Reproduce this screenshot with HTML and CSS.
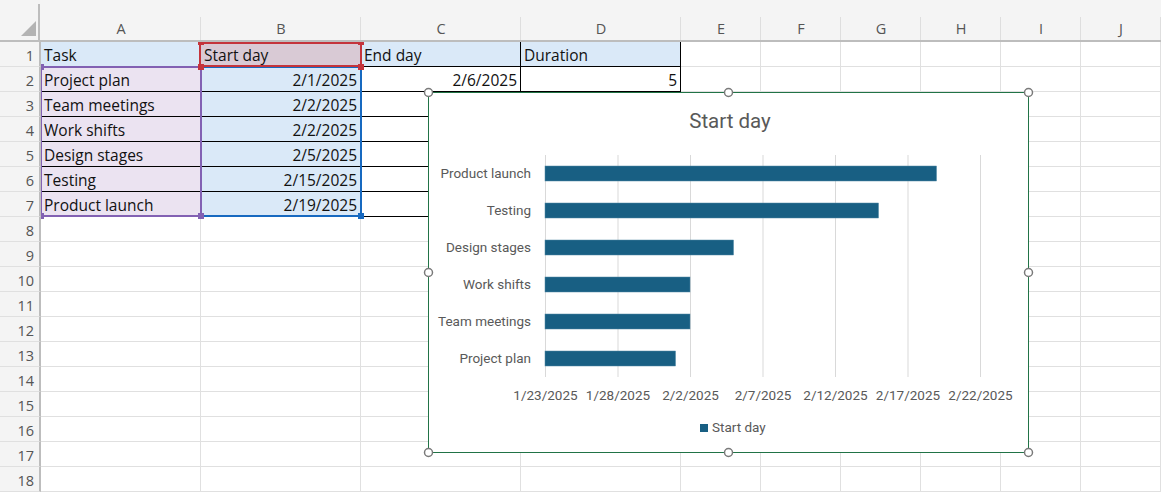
FILE: index.html
```html
<!DOCTYPE html>
<html lang="en">
<head>
    <meta charset="UTF-8">
    <title>Start day - Gantt sheet</title>

    <link rel="stylesheet" href="styles.css">

</head>
<body>

<div class="sheet">
    <!-- column headers -->
    <div class="corner">
        <svg width="41" height="40" viewBox="0 0 41 40">
            <rect x="38" y="4" width="2" height="36" fill="#bdbdbd"/>
            <polygon points="21,36 36,36 36,21" fill="#b3b3b3"/>
        </svg>
    </div>
    <div class="ch">A</div>
    <div class="ch">B</div>
    <div class="ch">C</div>
    <div class="ch">D</div>
    <div class="ch">E</div>
    <div class="ch">F</div>
    <div class="ch">G</div>
    <div class="ch">H</div>
    <div class="ch">I</div>
    <div class="ch">J</div>

    <!-- row 1 -->
    <div class="rh">1</div>
    <div class="c b fill-head">Task</div>
    <div class="c b fill-pick">Start day</div>
    <div class="c b fill-head">End day</div>
    <div class="c b fill-head">Duration</div>
    <div class="c"></div><div class="c"></div><div class="c"></div><div class="c"></div><div class="c"></div><div class="c"></div>

    <!-- row 2 -->
    <div class="rh">2</div>
    <div class="c b fill-task">Project plan</div>
    <div class="c b fill-date num">2/1/2025</div>
    <div class="c b num">2/6/2025</div>
    <div class="c b num">5</div>
    <div class="c"></div><div class="c"></div><div class="c"></div><div class="c"></div><div class="c"></div><div class="c"></div>

    <!-- row 3 -->
    <div class="rh">3</div>
    <div class="c b fill-task">Team meetings</div>
    <div class="c b fill-date num">2/2/2025</div>
    <div class="c b"></div>
    <div class="c b"></div>
    <div class="c"></div><div class="c"></div><div class="c"></div><div class="c"></div><div class="c"></div><div class="c"></div>

    <!-- row 4 -->
    <div class="rh">4</div>
    <div class="c b fill-task">Work shifts</div>
    <div class="c b fill-date num">2/2/2025</div>
    <div class="c b"></div>
    <div class="c b"></div>
    <div class="c"></div><div class="c"></div><div class="c"></div><div class="c"></div><div class="c"></div><div class="c"></div>

    <!-- row 5 -->
    <div class="rh">5</div>
    <div class="c b fill-task">Design stages</div>
    <div class="c b fill-date num">2/5/2025</div>
    <div class="c b"></div>
    <div class="c b"></div>
    <div class="c"></div><div class="c"></div><div class="c"></div><div class="c"></div><div class="c"></div><div class="c"></div>

    <!-- row 6 -->
    <div class="rh">6</div>
    <div class="c b fill-task">Testing</div>
    <div class="c b fill-date num">2/15/2025</div>
    <div class="c b"></div>
    <div class="c b"></div>
    <div class="c"></div><div class="c"></div><div class="c"></div><div class="c"></div><div class="c"></div><div class="c"></div>

    <!-- row 7 -->
    <div class="rh">7</div>
    <div class="c b fill-task">Product launch</div>
    <div class="c b fill-date num">2/19/2025</div>
    <div class="c b"></div>
    <div class="c b"></div>
    <div class="c"></div><div class="c"></div><div class="c"></div><div class="c"></div><div class="c"></div><div class="c"></div>

    <!-- rows 8 - 18, empty -->
    <div class="rh">8</div>
    <div class="c"></div><div class="c"></div><div class="c"></div><div class="c"></div><div class="c"></div><div class="c"></div><div class="c"></div><div class="c"></div><div class="c"></div><div class="c"></div>
    <div class="rh">9</div>
    <div class="c"></div><div class="c"></div><div class="c"></div><div class="c"></div><div class="c"></div><div class="c"></div><div class="c"></div><div class="c"></div><div class="c"></div><div class="c"></div>
    <div class="rh">10</div>
    <div class="c"></div><div class="c"></div><div class="c"></div><div class="c"></div><div class="c"></div><div class="c"></div><div class="c"></div><div class="c"></div><div class="c"></div><div class="c"></div>
    <div class="rh">11</div>
    <div class="c"></div><div class="c"></div><div class="c"></div><div class="c"></div><div class="c"></div><div class="c"></div><div class="c"></div><div class="c"></div><div class="c"></div><div class="c"></div>
    <div class="rh">12</div>
    <div class="c"></div><div class="c"></div><div class="c"></div><div class="c"></div><div class="c"></div><div class="c"></div><div class="c"></div><div class="c"></div><div class="c"></div><div class="c"></div>
    <div class="rh">13</div>
    <div class="c"></div><div class="c"></div><div class="c"></div><div class="c"></div><div class="c"></div><div class="c"></div><div class="c"></div><div class="c"></div><div class="c"></div><div class="c"></div>
    <div class="rh">14</div>
    <div class="c"></div><div class="c"></div><div class="c"></div><div class="c"></div><div class="c"></div><div class="c"></div><div class="c"></div><div class="c"></div><div class="c"></div><div class="c"></div>
    <div class="rh">15</div>
    <div class="c"></div><div class="c"></div><div class="c"></div><div class="c"></div><div class="c"></div><div class="c"></div><div class="c"></div><div class="c"></div><div class="c"></div><div class="c"></div>
    <div class="rh">16</div>
    <div class="c"></div><div class="c"></div><div class="c"></div><div class="c"></div><div class="c"></div><div class="c"></div><div class="c"></div><div class="c"></div><div class="c"></div><div class="c"></div>
    <div class="rh">17</div>
    <div class="c"></div><div class="c"></div><div class="c"></div><div class="c"></div><div class="c"></div><div class="c"></div><div class="c"></div><div class="c"></div><div class="c"></div><div class="c"></div>
    <div class="rh">18</div>
    <div class="c"></div><div class="c"></div><div class="c"></div><div class="c"></div><div class="c"></div><div class="c"></div><div class="c"></div><div class="c"></div><div class="c"></div><div class="c"></div>

    <!-- formula reference highlights -->
    <span class="range range-dates"></span>
    <span class="range range-tasks"></span>
    <span class="knob knob-blue" style="left: 358px; top: 213px;"></span>
    <span class="knob knob-purple" style="left: 38px; top: 64px;"></span>
    <span class="knob knob-purple" style="left: 38px; top: 213px;"></span>
    <span class="knob knob-purple" style="left: 198px; top: 213px;"></span>
    <span class="range range-pick"></span>
    <span class="knob knob-red" style="left: 198px; top: 39px;"></span>
    <span class="knob knob-red" style="left: 358px; top: 39px;"></span>
    <span class="knob knob-red" style="left: 198px; top: 64px;"></span>
    <span class="knob knob-red" style="left: 358px; top: 64px;"></span>

    <!-- chart object -->
    <div class="chart">
        <svg width="601" height="361" viewBox="0 0 601 361">
            <rect class="chart-frame" x="0.5" y="0.5" width="600" height="360"/>
            <text class="chart-title" x="302" y="36">Start day</text>

            <g class="grid-lines">
                <line x1="117.5" y1="63" x2="117.5" y2="285"/>
                <line x1="190" y1="63" x2="190" y2="285"/>
                <line x1="262.5" y1="63" x2="262.5" y2="285"/>
                <line x1="335" y1="63" x2="335" y2="285"/>
                <line x1="407.5" y1="63" x2="407.5" y2="285"/>
                <line x1="480" y1="63" x2="480" y2="285"/>
                <line x1="552.5" y1="63" x2="552.5" y2="285"/>
            </g>

            <g class="bars">
                <rect x="117" y="74" width="391.5" height="15"/>
                <rect x="117" y="111" width="333.5" height="15"/>
                <rect x="117" y="148" width="188.5" height="15"/>
                <rect x="117" y="185" width="145" height="15"/>
                <rect x="117" y="222" width="145" height="15"/>
                <rect x="117" y="259" width="130.5" height="15"/>
            </g>

            <g class="cat-labels">
                <text x="103" y="85.5">Product launch</text>
                <text x="103" y="122.5">Testing</text>
                <text x="103" y="159.5">Design stages</text>
                <text x="103" y="196.5">Work shifts</text>
                <text x="103" y="233.5">Team meetings</text>
                <text x="103" y="270.5">Project plan</text>
            </g>

            <g class="date-labels">
                <text x="117.5" y="308">1/23/2025</text>
                <text x="190" y="308">1/28/2025</text>
                <text x="262.5" y="308">2/2/2025</text>
                <text x="335" y="308">2/7/2025</text>
                <text x="407.5" y="308">2/12/2025</text>
                <text x="480" y="308">2/17/2025</text>
                <text x="552.5" y="308">2/22/2025</text>
            </g>

            <rect class="legend-key" x="272" y="332" width="8" height="8"/>
            <text class="legend-text" x="284" y="339.5">Start day</text>

            <g class="handles">
                <circle cx="0.5" cy="0.5" r="4"/>
                <circle cx="300.5" cy="0.5" r="4"/>
                <circle cx="600.5" cy="0.5" r="4"/>
                <circle cx="0.5" cy="180.5" r="4"/>
                <circle cx="600.5" cy="180.5" r="4"/>
                <circle cx="0.5" cy="360.5" r="4"/>
                <circle cx="300.5" cy="360.5" r="4"/>
                <circle cx="600.5" cy="360.5" r="4"/>
            </g>
        </svg>
    </div>
</div>

</body>
</html>
```

FILE: styles.css
```css
body {
    margin: 0;
    background: #ffffff;
    font-family: "Open Sans", "Noto Sans", sans-serif;
}

.sheet {
    position: relative;
    display: grid;
    grid-template-columns: 41px repeat(4, 160px) repeat(6, 80px);
    grid-template-rows: 42px repeat(18, 25px);
    width: 1161px;
}

.sheet > div {
    box-sizing: border-box;
}

/* headers */
.corner {
    position: relative;
    z-index: 2;
    background: #f4f4f4;
    border-bottom: 2px solid #bdbdbd;
}
.corner svg {
    display: block;
}

.ch {
    position: relative;
    z-index: 2;
    background: #f4f4f4 linear-gradient(#dedede, #dedede) no-repeat right bottom / 1px 23px;
    border-bottom: 2px solid #bdbdbd;
    padding-top: 17px;
    line-height: 23px;
    text-align: center;
    font-size: 14.5px;
    color: #555555;
}

.rh {
    position: relative;
    z-index: 2;
    background: #f4f4f4;
    border-right: 2px solid #bdbdbd;
    border-bottom: 1px solid #e0e0e0;
    padding: 1px 5px 0 0;
    line-height: 25px;
    text-align: right;
    font-size: 14.5px;
    color: #555555;
}

/* cells */
.c {
    border-right: 1px solid #e0e0e0;
    border-bottom: 1px solid #e0e0e0;
    padding: 1px 3px 0 3px;
    line-height: 25px;
    font-size: 15.5px;
    color: #111111;
    white-space: nowrap;
    overflow: hidden;
}
.c.b {
    border-color: #000000;
}
.num {
    text-align: right;
}

.fill-head { background: #dae9f8; }
.fill-pick { background: #d9cad5; }
.fill-task { background: #ebe3f1; }
.fill-date { background: #dae9f8; }

/* reference ranges */
.range {
    position: absolute;
    z-index: 1;
    box-sizing: border-box;
    border: 2px solid;
}
.range-dates {
    left: 200px;
    top: 66px;
    width: 162px;
    height: 151px;
    border-color: #1769c0;
}
.range-tasks {
    left: 40px;
    top: 66px;
    width: 162px;
    height: 151px;
    border-color: #8261b3;
}
.range-pick {
    left: 199px;
    top: 42px;
    width: 163px;
    height: 25px;
    border-color: #c4343c;
}

.knob {
    position: absolute;
    z-index: 1;
    width: 6px;
    height: 6px;
}
.knob-blue { background: #1769c0; }
.knob-purple { background: #8261b3; }
.knob-red { background: #c4343c; }

/* chart */
.chart {
    position: absolute;
    z-index: 3;
    left: 428px;
    top: 92px;
    width: 601px;
    height: 361px;
    background: #ffffff;
}
.chart svg {
    display: block;
    overflow: visible;
    font-family: Roboto, "Liberation Sans", sans-serif;
}

.chart-frame {
    fill: #ffffff;
    stroke: #217346;
    stroke-width: 1;
}
.chart-title {
    font-size: 20.5px;
    fill: #595959;
    text-anchor: middle;
}
.grid-lines line {
    stroke: #d9d9d9;
    stroke-width: 1;
}
.bars rect {
    fill: #185f83;
    stroke: #4f87a4;
    stroke-width: 0.5;
}
.cat-labels text {
    font-size: 13.5px;
    fill: #595959;
    text-anchor: end;
}
.date-labels text {
    font-size: 13.5px;
    fill: #595959;
    text-anchor: middle;
}
.legend-key {
    fill: #185f83;
}
.legend-text {
    font-size: 13.5px;
    fill: #595959;
}
.handles circle {
    fill: #ffffff;
    stroke: #7a7a7a;
    stroke-width: 1.5;
}
```
